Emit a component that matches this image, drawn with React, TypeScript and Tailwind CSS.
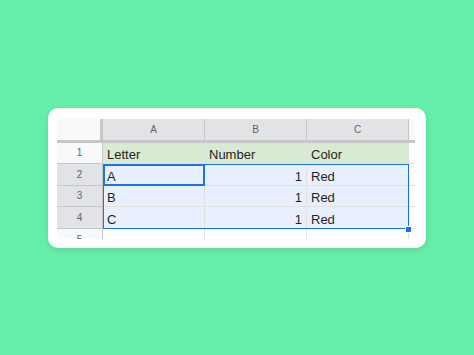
import React from "react";

const rows = [
  { n: 1, a: "Letter", b: "Number", c: "Color", head: true },
  { n: 2, a: "A", b: "1", c: "Red" },
  { n: 3, a: "B", b: "1", c: "Red" },
  { n: 4, a: "C", b: "1", c: "Red" },
];

const font = { fontFamily: '"Liberation Sans", Arial, sans-serif' };

export default function App() {
  return (
    <div className="w-[474px] h-[355px] bg-[#66efaa] flex items-center justify-center" style={font}>
      <div className="w-[378px] h-[140px] bg-white rounded-[10px] shadow-[0_2px_6px_rgba(0,0,0,0.12)] pl-[9px] pr-[11px] pt-[11px]">
        <div className="relative h-[120px] overflow-hidden">
          {/* header row */}
          <div className="grid grid-cols-[46px_102px_102px_102px_1fr] h-[24px] border-b-[3px] border-[#c4c7c5]">
            <div className="bg-[#f8f9fa] border-r-[3px] border-[#c4c7c5]" />
            {["A", "B", "C"].map((l) => (
              <div key={l} className="bg-[#e1e3e6] border-r border-[#c4c7c5] flex items-center justify-center text-[10px] text-[#5f6368]">
                {l}
              </div>
            ))}
            <div className="bg-[#f8f9fa]" />
          </div>

          {rows.map((r) => (
            <div key={r.n} className="grid grid-cols-[46px_102px_102px_102px_1fr] h-[21.5px] text-[13px] text-[#1f1f1f]">
              <div className={`${r.head ? "bg-[#f8f9fa]" : "bg-[#e1e3e6]"} border-b border-r border-[#c4c7c5] flex items-center justify-center text-[10px] text-[#5f6368]`}>
                {r.n}
              </div>
              <div className={`${r.head ? "bg-[#d9ead3]" : "bg-[#e8f0fe]"} border-b border-r border-[#e1e1e1] flex items-end pb-[2px] px-[4px] leading-none`}>
                {r.a}
              </div>
              <div className={`${r.head ? "bg-[#d9ead3] justify-start" : "bg-[#e8f0fe] justify-end"} border-b border-r border-[#e1e1e1] flex items-end pb-[2px] px-[4px] leading-none`}>
                {r.b}
              </div>
              <div className={`${r.head ? "bg-[#d9ead3]" : "bg-[#e8f0fe]"} border-b border-r border-[#e1e1e1] flex items-end pb-[2px] px-[4px] leading-none`}>
                {r.c}
              </div>
              <div className="border-b border-[#e1e1e1]" />
            </div>
          ))}

          <div className="grid grid-cols-[46px_102px_102px_102px_1fr] h-[21.5px]">
            <div className="bg-[#f8f9fa] border-r border-[#c4c7c5] flex items-center justify-center text-[10px] text-[#5f6368]">5</div>
            <div className="border-r border-[#e1e1e1]" />
            <div className="border-r border-[#e1e1e1]" />
            <div className="border-r border-[#e1e1e1]" />
            <div />
          </div>

          {/* selection range */}
          <div className="absolute left-[46px] top-[45.5px] w-[306px] h-[65px] border border-[#1a73e8] pointer-events-none" />
          <div className="absolute left-[46px] top-[45.5px] w-[102px] h-[22px] border-2 border-[#1a73e8] pointer-events-none" />
          <div className="absolute left-[348px] top-[107px] w-[7px] h-[7px] bg-[#1a73e8] border border-white" />
        </div>
      </div>
    </div>
  );
}
